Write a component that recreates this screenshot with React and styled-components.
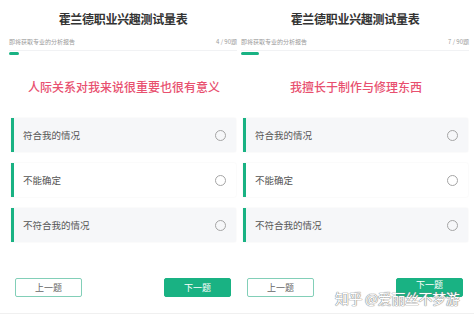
import React from "react";
import styled, { createGlobalStyle } from "styled-components";

const Global = createGlobalStyle`
  html, body { margin: 0; padding: 0; background: #fff; }
  body { font-family: "Noto Sans CJK SC", "Noto Sans", sans-serif; }
`;

const GREEN = "#19b283";

const Stage = styled.div`
  position: relative;
  width: 474px;
  height: 316px;
  overflow: hidden;
  display: flex;
  background: #fff;
`;

const Panel = styled.div`
  flex: 0 0 246px;
  width: 246px;
  margin-left: ${(p) => (p.$overlap ? "-14px" : "0")};
  display: flex;
  flex-direction: column;
  box-sizing: border-box;
  padding: 0 9px 0 9px;
`;

const Title = styled.div`
  margin-top: 12px;
  height: 14px;
  line-height: 14px;
  text-align: center;
  font-size: 12px;
  font-weight: 700;
  color: #333;
  letter-spacing: -0.3px;
`;

const InfoRow = styled.div`
  margin-top: 12px;
  display: flex;
  justify-content: space-between;
  align-items: center;
  height: 8px;
  padding-bottom: 4px;
  border-bottom: 1px solid #f1f2f4;
  font-size: 6px;
  color: #9a9a9a;
  line-height: 8px;
`;

const Track = styled.div`
  margin-top: 1px;
  height: 3px;
  width: 225px;
`;

const Fill = styled.div`
  height: 3px;
  border-radius: 2px;
  background: ${GREEN};
`;

const Question = styled.div`
  margin-top: 24px;
  height: 16px;
  line-height: 16px;
  text-align: center;
  font-size: 12px;
  font-weight: 500;
  color: #e8506f;
  padding-left: 2px;
`;

const Options = styled.div`
  margin-top: 23px;
  margin-left: 2px;
  width: 225px;
  display: flex;
  flex-direction: column;
  gap: 11px;
`;

const Card = styled.div`
  height: 34px;
  box-sizing: border-box;
  display: flex;
  align-items: center;
  justify-content: space-between;
  padding: 0 10px 0 9px;
  border-left: 3px solid ${GREEN};
  background: ${(p) => (p.$shade ? "#f6f7f9" : "#fff")};
  box-shadow: 0 0 2px rgba(0, 0, 0, 0.07);
  border-radius: 0 2px 2px 0;
`;

const CardText = styled.span`
  font-size: 9.5px;
  color: #555;
`;

const Radio = styled.span`
  width: 11px;
  height: 11px;
  box-sizing: border-box;
  border-radius: 50%;
  border: 1px solid #a5a5a5;
`;

const Buttons = styled.div`
  margin-top: 36px;
  margin-left: ${(p) => (p.$inset ? "6px" : "6px")};
  width: 216px;
  display: flex;
  justify-content: space-between;
`;

const Button = styled.div`
  width: 67px;
  height: 19px;
  box-sizing: border-box;
  border-radius: 2px;
  display: flex;
  align-items: center;
  justify-content: center;
  font-size: 9px;
  border: 1px solid ${(p) => (p.$primary ? GREEN : "#82cfb8")};
  background: ${(p) => (p.$primary ? GREEN : "#fff")};
  color: ${(p) => (p.$primary ? "#fff" : "#666")};
  padding-bottom: ${(p) => (p.$lift ? "6px" : "0")};
`;

const BottomLine = styled.div`
  position: absolute;
  left: 0;
  right: 0;
  top: 313px;
  height: 1px;
  background: #f0f0f0;
`;

const Watermark = styled.div`
  position: absolute;
  left: 335px;
  top: 289px;
  font-size: 14px;
  line-height: 18px;
  color: #fff;
  letter-spacing: -0.4px;
  text-shadow: 0 0 1px #8a8a8a, 0 0 1px #8a8a8a, 0 0 1px #8a8a8a;
  white-space: nowrap;
`;

const options = ["符合我的情况", "不能确定", "不符合我的情况"];

function Screen({ question, current, overlap, lift }) {
  return (
    <Panel $overlap={overlap}>
      <Title>霍兰德职业兴趣测试量表</Title>
      <InfoRow>
        <span>即将获取专业的分析报告</span>
        <span>{current} / 90题</span>
      </InfoRow>
      <Track>
        <Fill style={{ width: `${(current / 90) * 225}px` }} />
      </Track>
      <Question>{question}</Question>
      <Options>
        {options.map((o, i) => (
          <Card key={o} $shade={i !== 1}>
            <CardText>{o}</CardText>
            <Radio />
          </Card>
        ))}
      </Options>
      <Buttons>
        <Button>上一题</Button>
        <Button $primary $lift={lift}>下一题</Button>
      </Buttons>
    </Panel>
  );
}

export default function App() {
  return (
    <>
      <Global />
      <Stage>
        <Screen question="人际关系对我来说很重要也很有意义" current={4} />
        <Screen question="我擅长于制作与修理东西" current={7} overlap lift />
        <BottomLine />
        <Watermark>知乎 @爱丽丝不梦游</Watermark>
      </Stage>
    </>
  );
}
